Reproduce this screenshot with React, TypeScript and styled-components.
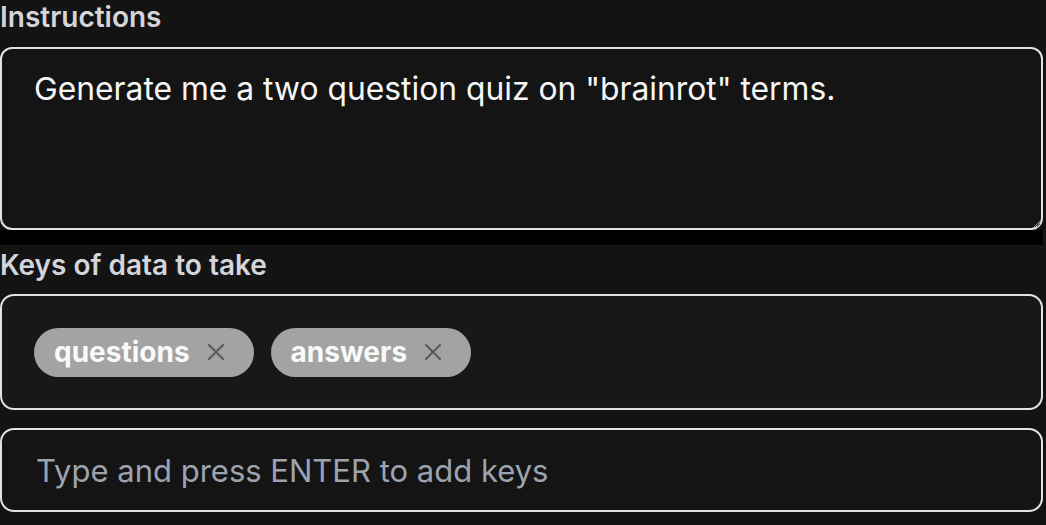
import React from "react";
import styled, { createGlobalStyle } from "styled-components";

const GlobalStyle = createGlobalStyle`
  html, body {
    margin: 0;
    padding: 0;
    background: #131313;
    color-scheme: dark;
  }
  * {
    box-sizing: border-box;
  }
`;

function CloseIcon() {
  return (
    <svg width="18" height="18" viewBox="0 0 18 18" fill="none">
      <path d="M2 2L16 16M16 2L2 16" stroke="#5a5a5a" strokeWidth="2" strokeLinecap="round" />
    </svg>
  );
}

function App() {
  const keys = ["questions", "answers"];

  return (
    <Wrap>
      <GlobalStyle />
      <Section>
        <Label>Instructions</Label>
        <Instructions
          defaultValue={'Generate me a two question quiz on "brainrot" terms.'}
        />
      </Section>
      <Divider />
      <Section>
        <KeysLabel>Keys of data to take</KeysLabel>
        <ChipBox>
          {keys.map((k) => (
            <Chip key={k}>
              <ChipText>{k}</ChipText>
              <CloseIcon />
            </Chip>
          ))}
        </ChipBox>
        <KeyInput placeholder="Type and press ENTER to add keys" />
      </Section>
    </Wrap>
  );
}

const Wrap = styled.div`
  display: flex;
  flex-direction: column;
  width: 1043px;
  font-family: Inter, "Noto Sans", sans-serif;
`;

const Section = styled.div`
  display: flex;
  flex-direction: column;
`;

const Label = styled.div`
  font-size: 28px;
  font-weight: 600;
  color: #d3d5db;
  margin-bottom: 13px;
`;

const KeysLabel = styled(Label)`
  margin-top: 3px;
  margin-bottom: 12px;
`;

const Instructions = styled.textarea`
  height: 183px;
  width: 100%;
  padding: 20px 32px;
  background: #141414;
  border: 2px solid #e2e2e2;
  border-radius: 12px;
  color: #f6f6f6;
  font-family: Inter, "Noto Sans", sans-serif;
  font-size: 31.8px;
  outline: none;
  resize: vertical;
`;

const Divider = styled.div`
  height: 15px;
  background: #000;
`;

const ChipBox = styled.div`
  display: flex;
  align-items: center;
  gap: 17px;
  height: 116px;
  padding: 0 32px;
  background: #181818;
  border: 2px solid #e2e2e2;
  border-radius: 14px;
  margin-bottom: 18px;
`;

const Chip = styled.div`
  display: flex;
  align-items: center;
  gap: 17px;
  height: 49px;
  padding: 0 29px 0 20px;
  background: #a3a3a3;
  border-radius: 25px;
`;

const ChipText = styled.span`
  font-size: 28px;
  font-weight: 700;
  color: #fafafa;
`;

const KeyInput = styled.input`
  height: 84px;
  width: 100%;
  padding: 0 34px;
  background: #141414;
  border: 2px solid #e2e2e2;
  border-radius: 14px;
  color: #f6f6f6;
  font-family: Inter, "Noto Sans", sans-serif;
  font-size: 31px;
  outline: none;

  &::placeholder {
    color: #9ca3af;
  }
`;

export default App;
